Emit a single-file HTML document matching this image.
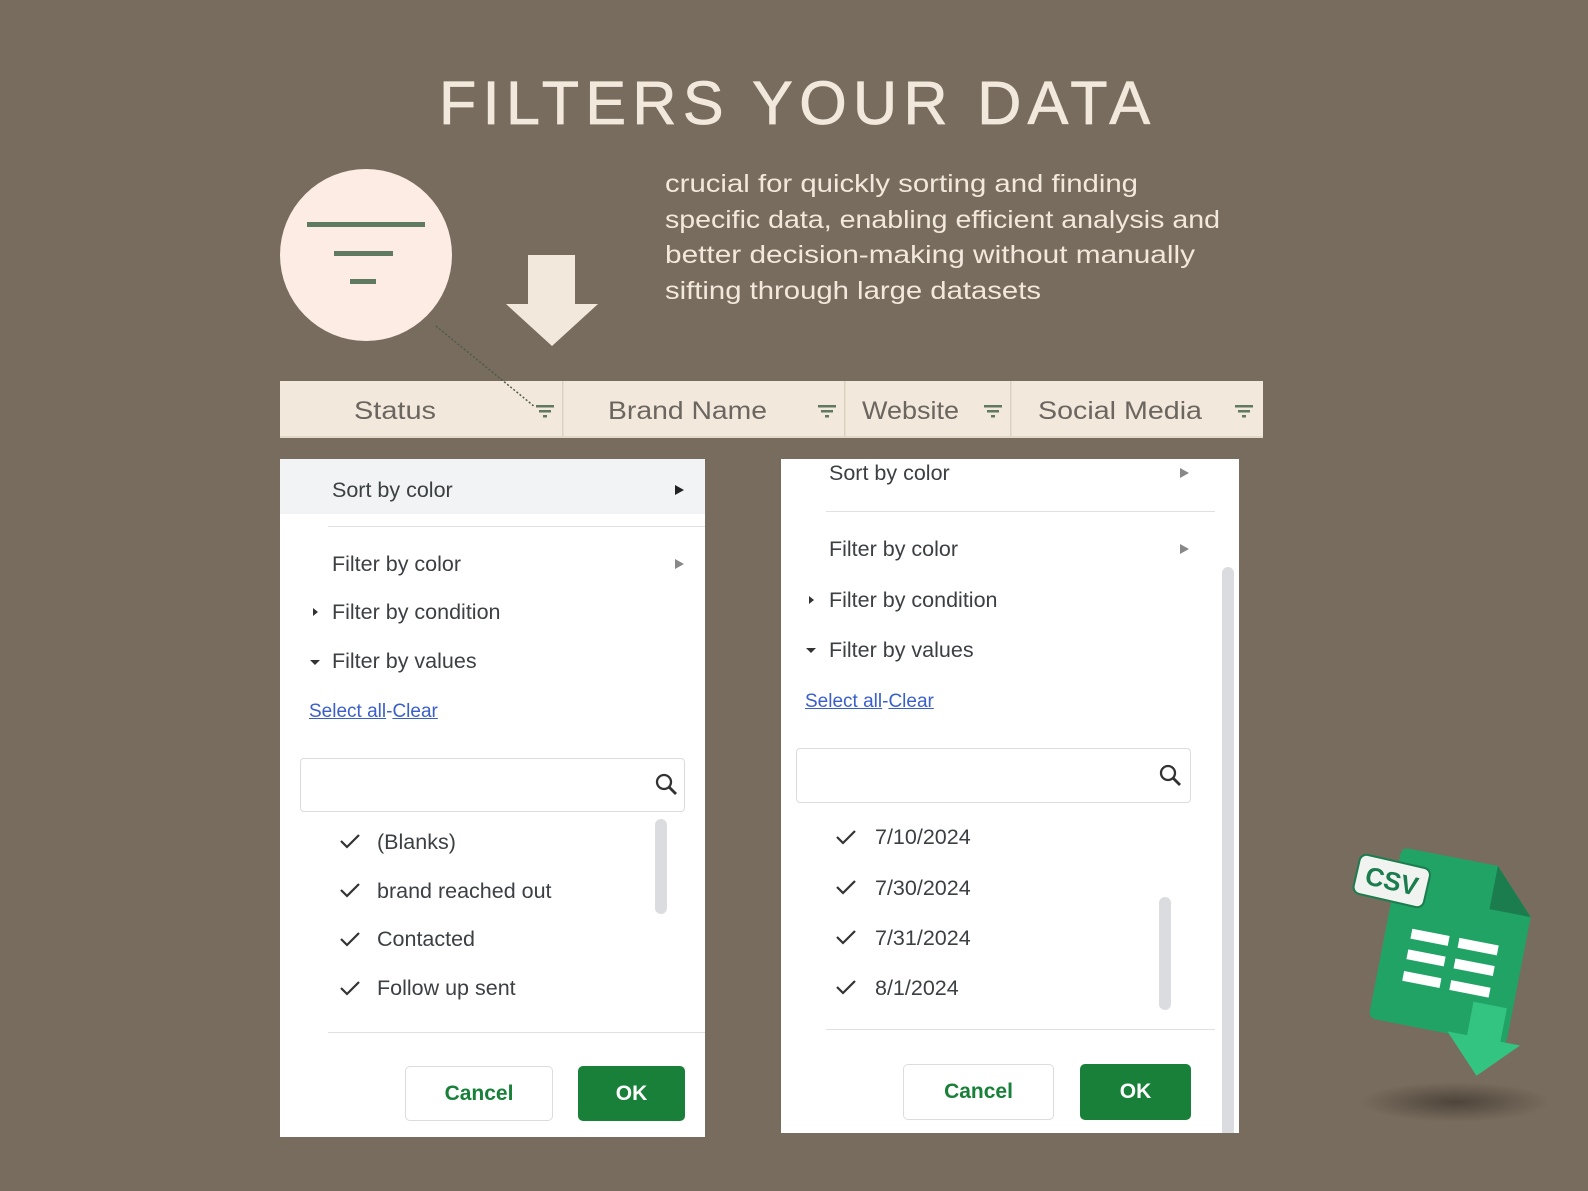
<!DOCTYPE html>
<html><head><meta charset="utf-8">
<style>
*{margin:0;padding:0;box-sizing:border-box}
body{width:1588px;height:1191px;background:#786c5e;position:relative;overflow:hidden;font-family:"Liberation Sans",Arial,sans-serif}
.a{position:absolute}
.t{position:absolute;height:30px;line-height:30px;font-size:21.5px;color:#3c4043;white-space:nowrap}
.panel{position:absolute;background:#fff}
.hl{position:absolute;height:1px;background:#e0e0e0}
.lnk{color:#3a5fc8;text-decoration:underline;font-size:19px}
.btn{position:absolute;border-radius:5px;font-size:21px;font-weight:bold;text-align:center}
.cancel{border:1px solid #dadce0;color:#188038;background:#fff}
.ok{background:#188038;color:#fff}
.sb{position:absolute;background:#dadce0;border-radius:6px}
.tri-r{position:absolute;width:0;height:0;border-top:5px solid transparent;border-bottom:5px solid transparent;border-left:9px solid #222}
.tri-rs{position:absolute;width:0;height:0;border-top:4px solid transparent;border-bottom:4px solid transparent;border-left:5px solid #333}
.tri-d{position:absolute;width:0;height:0;border-left:5px solid transparent;border-right:5px solid transparent;border-top:5px solid #333}
</style></head><body>

<svg class="a" style="left:0;top:0" width="1588" height="460">
  <text x="439" y="124" font-family="Liberation Sans" font-size="61" fill="#f3e8dc" stroke="#f3e8dc" stroke-width="0.8" textLength="711" lengthAdjust="spacing">FILTERS YOUR DATA</text>
  <g font-family="Liberation Sans" font-size="25" fill="#f3e8dc">
    <text x="665" y="192" textLength="473" lengthAdjust="spacingAndGlyphs">crucial for quickly sorting and finding</text>
    <text x="665" y="228" textLength="555" lengthAdjust="spacingAndGlyphs">specific data, enabling efficient analysis and</text>
    <text x="665" y="263" textLength="530" lengthAdjust="spacingAndGlyphs">better decision-making without manually</text>
    <text x="665" y="299" textLength="376" lengthAdjust="spacingAndGlyphs">sifting through large datasets</text>
  </g>
  <circle cx="366" cy="255" r="86" fill="#fdece3"/>
  <rect x="307" y="222" width="118" height="5" fill="#5f7a61"/>
  <rect x="334" y="251" width="59" height="5" fill="#5f7a61"/>
  <rect x="350" y="279" width="26" height="5" fill="#5f7a61"/>
  <polygon points="528,255 575,255 575,304 598,304 552,346 506,304 528,304" fill="#f3e8dc"/>
  <rect x="280" y="381" width="983" height="56" fill="#f3e8dc"/>
  <rect x="280" y="436" width="983" height="2" fill="#e4d8ca"/>
  <rect x="562" y="381" width="1.5" height="56" fill="#ddd1c2"/>
  <rect x="844" y="381" width="1.5" height="56" fill="#ddd1c2"/>
  <rect x="1010" y="381" width="1.5" height="56" fill="#ddd1c2"/>
  <line x1="436" y1="326" x2="535" y2="407" stroke="#4d5a4c" stroke-width="1.5" stroke-dasharray="2,2"/>
  <g font-family="Liberation Sans" font-size="25" fill="#6b6660">
    <text x="354" y="419" textLength="82" lengthAdjust="spacingAndGlyphs">Status</text>
    <text x="608" y="419" textLength="159" lengthAdjust="spacingAndGlyphs">Brand Name</text>
    <text x="862" y="419" textLength="97" lengthAdjust="spacingAndGlyphs">Website</text>
    <text x="1038" y="419" textLength="164" lengthAdjust="spacingAndGlyphs">Social Media</text>
  </g>
  <g fill="#5f7a61">
    <g transform="translate(545,411)"><rect x="-9" y="-6" width="18" height="2.5"/><rect x="-6" y="-1" width="12" height="2.5"/><rect x="-2" y="4" width="4" height="2.5"/></g>
    <g transform="translate(827,411)"><rect x="-9" y="-6" width="18" height="2.5"/><rect x="-6" y="-1" width="12" height="2.5"/><rect x="-2" y="4" width="4" height="2.5"/></g>
    <g transform="translate(993,411)"><rect x="-9" y="-6" width="18" height="2.5"/><rect x="-6" y="-1" width="12" height="2.5"/><rect x="-2" y="4" width="4" height="2.5"/></g>
    <g transform="translate(1244,411)"><rect x="-9" y="-6" width="18" height="2.5"/><rect x="-6" y="-1" width="12" height="2.5"/><rect x="-2" y="4" width="4" height="2.5"/></g>
  </g>
</svg>

<!-- Left panel -->
<div class="panel" style="left:280px;top:459px;width:425px;height:678px">
  <div class="a" style="left:0;top:0;width:425px;height:55px;background:#f1f3f4"></div>
</div>
<div class="t" style="left:332px;top:475px">Sort by color</div>
<div class="tri-r" style="left:675px;top:485px"></div>
<div class="hl" style="left:328px;top:526px;width:377px"></div>
<div class="t" style="left:332px;top:549px">Filter by color</div>
<div class="tri-r" style="left:675px;top:559px;border-left-color:#888"></div>
<div class="tri-rs" style="left:313px;top:608px"></div>
<div class="t" style="left:332px;top:597px">Filter by condition</div>
<div class="tri-d" style="left:310px;top:660px"></div>
<div class="t" style="left:332px;top:646px">Filter by values</div>
<div class="t" style="left:309px;top:695px"><span class="lnk">Select all</span><span style="color:#3a5fc8;font-size:19px">-</span><span class="lnk">Clear</span></div>
<div class="a" style="left:300px;top:758px;width:385px;height:54px;border:1px solid #dadce0;border-radius:4px;background:#fff"></div>
<svg class="a" style="left:654px;top:772px" width="26" height="26"><circle cx="10" cy="10" r="7" fill="none" stroke="#333" stroke-width="2.3"/><line x1="15" y1="15" x2="22" y2="22" stroke="#333" stroke-width="2.8"/></svg>
<div class="sb" style="left:655px;top:819px;width:12px;height:95px"></div>
<svg class="a" style="left:338px;top:830px" width="26" height="170" fill="none" stroke="#333" stroke-width="2.2">
  <path d="M3 11 L9 17 L21 5"/><path d="M3 60 L9 66 L21 54"/><path d="M3 109 L9 115 L21 103"/><path d="M3 158 L9 164 L21 152"/>
</svg>
<div class="t" style="left:377px;top:827px">(Blanks)</div>
<div class="t" style="left:377px;top:876px">brand reached out</div>
<div class="t" style="left:377px;top:924px">Contacted</div>
<div class="t" style="left:377px;top:973px">Follow up sent</div>
<div class="hl" style="left:328px;top:1032px;width:377px"></div>
<div class="btn cancel" style="left:405px;top:1066px;width:148px;height:55px;line-height:53px">Cancel</div>
<div class="btn ok" style="left:578px;top:1066px;width:107px;height:55px;line-height:55px">OK</div>

<!-- Right panel -->
<div class="panel" style="left:781px;top:459px;width:458px;height:674px"></div>
<div class="sb" style="left:1222px;top:567px;width:12px;height:566px;border-radius:6px 6px 0 0"></div>
<div class="t" style="left:829px;top:458px">Sort by color</div>
<div class="tri-r" style="left:1180px;top:468px;border-left-color:#888"></div>
<div class="hl" style="left:826px;top:511px;width:389px"></div>
<div class="t" style="left:829px;top:534px">Filter by color</div>
<div class="tri-r" style="left:1180px;top:544px;border-left-color:#888"></div>
<div class="tri-rs" style="left:809px;top:596px"></div>
<div class="t" style="left:829px;top:585px">Filter by condition</div>
<div class="tri-d" style="left:806px;top:648px"></div>
<div class="t" style="left:829px;top:635px">Filter by values</div>
<div class="t" style="left:805px;top:685px"><span class="lnk">Select all</span><span style="color:#3a5fc8;font-size:19px">-</span><span class="lnk">Clear</span></div>
<div class="a" style="left:796px;top:748px;width:395px;height:55px;border:1px solid #dadce0;border-radius:4px;background:#fff"></div>
<svg class="a" style="left:1158px;top:763px" width="26" height="26"><circle cx="10" cy="10" r="7" fill="none" stroke="#333" stroke-width="2.3"/><line x1="15" y1="15" x2="22" y2="22" stroke="#333" stroke-width="2.8"/></svg>
<div class="sb" style="left:1159px;top:897px;width:12px;height:113px"></div>
<svg class="a" style="left:834px;top:826px" width="26" height="170" fill="none" stroke="#333" stroke-width="2.2">
  <path d="M3 11 L9 17 L21 5"/><path d="M3 61 L9 67 L21 55"/><path d="M3 111 L9 117 L21 105"/><path d="M3 161 L9 167 L21 155"/>
</svg>
<div class="t" style="left:875px;top:822px">7/10/2024</div>
<div class="t" style="left:875px;top:873px">7/30/2024</div>
<div class="t" style="left:875px;top:923px">7/31/2024</div>
<div class="t" style="left:875px;top:973px">8/1/2024</div>
<div class="hl" style="left:826px;top:1029px;width:389px"></div>
<div class="btn cancel" style="left:903px;top:1064px;width:151px;height:56px;line-height:54px">Cancel</div>
<div class="btn ok" style="left:1080px;top:1064px;width:111px;height:56px;line-height:56px">OK</div>

<!-- CSV icon -->
<svg class="a" style="left:1330px;top:830px" width="258" height="310">
  <defs><radialGradient id="sh"><stop offset="0" stop-color="#4a4036" stop-opacity="0.9"/><stop offset="1" stop-color="#4a4036" stop-opacity="0"/></radialGradient></defs>
  <ellipse cx="125" cy="272" rx="95" ry="20" fill="url(#sh)"/>
  <g transform="translate(124,115) rotate(11)">
    <path d="M-62 -86 Q-70 -86 -70 -78 L-70 80 Q-70 88 -62 88 L64 88 Q70 88 70 80 L70 -42 L28 -86 Z" fill="#21a366"/>
    <path d="M28 -86 L70 -42 L28 -42 Z" fill="#1b7d4e"/>
    <g fill="#fff">
      <rect x="-44" y="-8" width="38" height="10"/><rect x="4" y="-8" width="40" height="10"/>
      <rect x="-44" y="13" width="38" height="10"/><rect x="4" y="13" width="40" height="10"/>
      <rect x="-44" y="35" width="38" height="10"/><rect x="4" y="35" width="40" height="10"/>
    </g>
    <path d="M30 52 L64 52 L64 86 L84 86 L47 124 L10 86 L30 86 Z" fill="#33c481"/>
  </g>
  <g transform="translate(62,50) rotate(13)">
    <rect x="-36" y="-19" width="72" height="40" rx="7" fill="#f1f3f1" stroke="#1b7d4e" stroke-width="2"/>
    <text x="0" y="10" text-anchor="middle" font-family="Liberation Sans" font-weight="bold" font-size="26" fill="#1b7d4e">CSV</text>
  </g>
</svg>

</body></html>
